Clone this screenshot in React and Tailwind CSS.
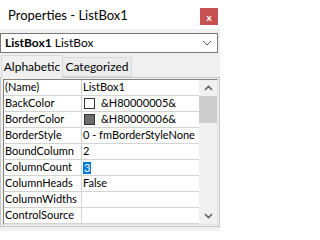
import React from "react";

const rows = [
  { name: "(Name)", value: "ListBox1" },
  { name: "BackColor", value: "&H80000005&", swatch: "bg-white" },
  { name: "BorderColor", value: "&H80000006&", swatch: "bg-[#6b6b6b]" },
  { name: "BorderStyle", value: "0 - fmBorderStyleNone" },
  { name: "BoundColumn", value: "2" },
  { name: "ColumnCount", value: "3", selected: true },
  { name: "ColumnHeads", value: "False" },
  { name: "ColumnWidths", value: "" },
  { name: "ControlSource", value: "" },
];

function Chevron({ up }) {
  return (
    <svg width="9" height="6" viewBox="0 0 9 6" className="block">
      <path
        d={up ? "M1 5 L4.5 1.5 L8 5" : "M1 1 L4.5 4.5 L8 1"}
        fill="none"
        stroke="#606060"
        strokeWidth="1.6"
      />
    </svg>
  );
}

export default function App() {
  return (
    <div className="w-[220px] h-[231px] overflow-hidden whitespace-nowrap bg-[#f0f0f0] text-black font-['Lato',sans-serif]">
      {/* title bar */}
      <div className="flex h-[29px] items-start justify-between bg-white pl-[8px] pr-[2px]">
        <span className="mt-[8px] text-[13px] leading-[15px]">Properties - ListBox1</span>
        <div className="mt-[8px] flex h-[17px] w-[18px] items-center justify-center bg-[#c75050] text-[10px] font-bold leading-none text-white">
          x
        </div>
      </div>

      {/* object selector */}
      <div className="pt-[4px]">
        <div className="flex h-[20px] w-[218px] items-center justify-between border border-[#7a7a7a] bg-white pl-[4px] pr-[5px] text-[12px]">
          <span>
            <b>ListBox1</b> ListBox
          </span>
          <svg width="10" height="6" viewBox="0 0 10 6">
            <path d="M1 1 L5 5 L9 1" fill="none" stroke="#555" strokeWidth="1" />
          </svg>
        </div>
      </div>

      {/* tabs */}
      <div className="relative z-10 mt-[2px] flex h-[22px] items-end pl-[1px] text-[12px]">
        <div className="-mb-[1px] flex h-[23px] w-[62px] items-center justify-center border border-b-0 border-[#d9d9d9] bg-[#f0f0f0]">
          Alphabetic
        </div>
        <div className="flex h-[20px] w-[69px] items-center justify-center border border-l-0 border-[#d9d9d9] bg-[#ececec]">
          Categorized
        </div>
      </div>

      {/* property grid */}
      <div className="w-[220px] border border-[#c8c8c8] pb-[1px] pl-[2px] pr-[1px] pt-[1px]">
        <div className="flex border border-[#828282] border-b-[#e3e3e3] border-r-[#e3e3e3] bg-white text-[11px]">
          <div className="min-w-0 flex-1">
            {rows.map((r) => (
              <div key={r.name} className="flex h-[16px] border-b border-[#d4d4d4]">
                <div className="flex w-[78px] items-center overflow-hidden border-r border-[#d4d4d4] pl-[1px]">
                  {r.name}
                </div>
                <div className="flex min-w-0 flex-1 items-center overflow-hidden pl-[1px]">
                  {r.swatch && (
                    <span className={`mr-[6px] ml-[1px] h-[11px] w-[11px] shrink-0 border border-[#333] ${r.swatch}`} />
                  )}
                  {r.selected ? (
                    <span className="bg-[#0078d7] px-[1px] leading-[12px] text-white">{r.value}</span>
                  ) : (
                    r.value
                  )}
                </div>
              </div>
            ))}
          </div>
          <div className="flex w-[18px] shrink-0 flex-col bg-[#f0f0f0]">
            <div className="flex h-[16px] items-center justify-center">
              <Chevron up />
            </div>
            <div className="h-[27px] bg-[#cdcdcd]" />
            <div className="flex-1" />
            <div className="flex h-[16px] items-center justify-center">
              <Chevron />
            </div>
          </div>
        </div>
      </div>
    </div>
  );
}
